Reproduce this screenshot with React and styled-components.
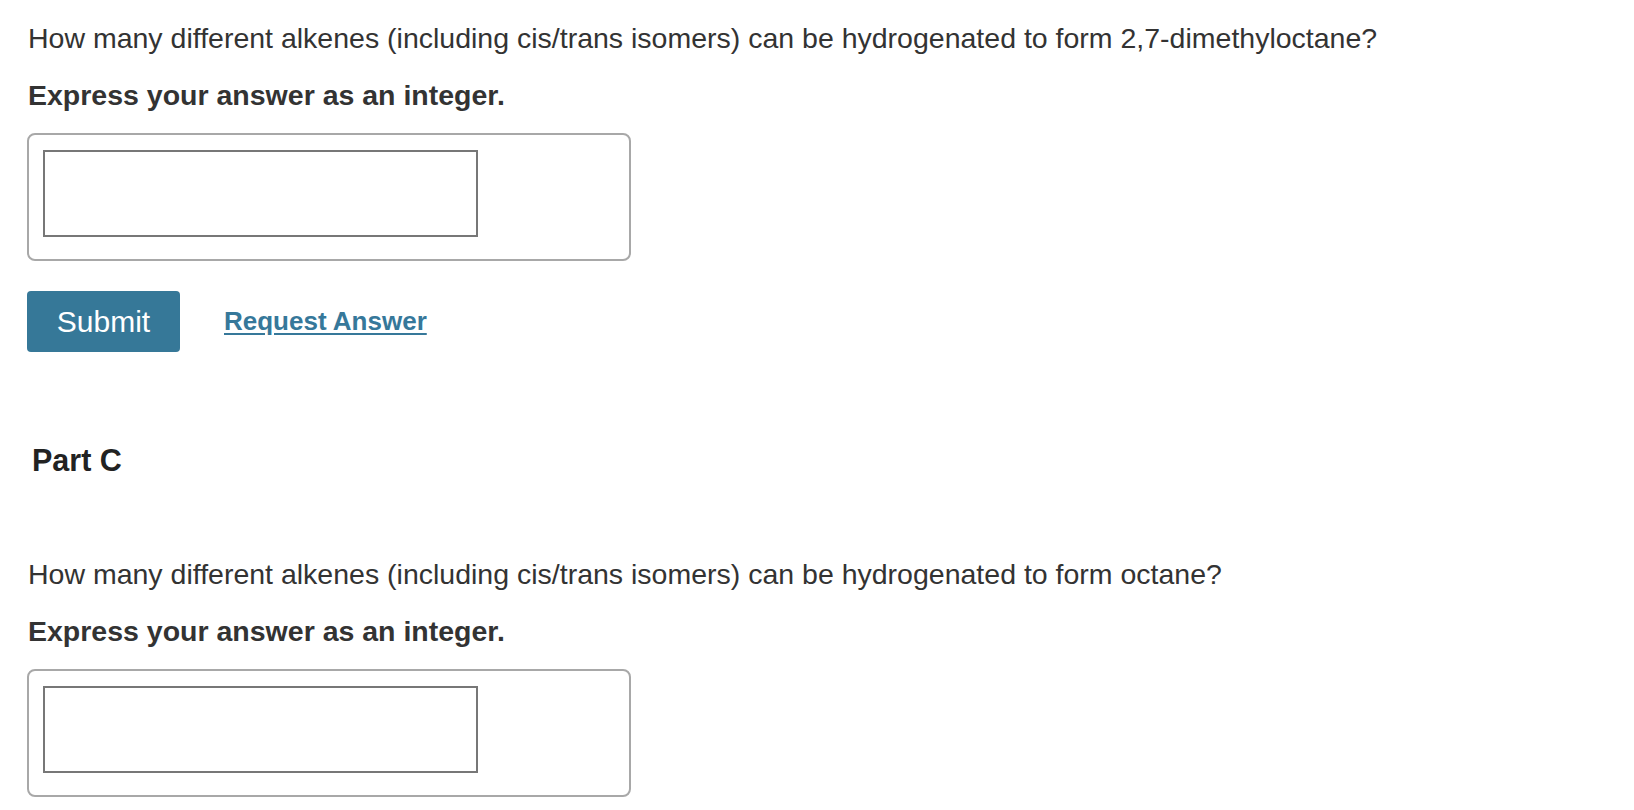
import React from "react";
import styled, { createGlobalStyle } from "styled-components";

const Global = createGlobalStyle`
  html, body { margin: 0; padding: 0; background: #fff; }
  body { font-family: "Liberation Sans", Arial, Helvetica, sans-serif; color: #333; }
`;

const Page = styled.div`
  display: flex;
  flex-direction: column;
  padding: 20px 0 0 28px;
`;

const Section = styled.section`
  display: flex;
  flex-direction: column;
  align-items: flex-start;
`;

const Prompt = styled.p`
  margin: 0;
  font-size: 28.5px;
  line-height: 36px;
  color: #333;
`;

const Instruction = styled.p`
  margin: 21px 0 0;
  font-size: 28.5px;
  line-height: 36px;
  font-weight: bold;
  color: #333;
`;

const AnswerBox = styled.div`
  margin: 20px 0 0 -1px;
  width: 604px;
  height: 128px;
  box-sizing: border-box;
  border: 2px solid #a8a8a8;
  border-radius: 8px;
  padding: 15px 0 0 14px;
`;

const AnswerInput = styled.input`
  display: block;
  width: 435px;
  height: 87px;
  box-sizing: border-box;
  border: 2px solid #777;
  border-radius: 0;
  margin: 0;
  padding: 0 8px;
  font-size: 26px;
  font-family: inherit;
  outline: none;
`;

const Actions = styled.div`
  display: flex;
  align-items: center;
  gap: 44px;
  margin: 30px 0 0 -1px;
`;

const SubmitButton = styled.button`
  width: 153px;
  height: 61px;
  border: none;
  border-radius: 4px;
  background: #367898;
  color: #fff;
  font-family: inherit;
  font-size: 30px;
  cursor: pointer;
  padding: 0;
`;

const RequestLink = styled.a`
  color: #36789a;
  font-weight: bold;
  font-size: 26px;
  text-decoration: underline;
  text-underline-offset: 3px;
  cursor: pointer;
`;

const PartTitle = styled.h2`
  margin: 90px 0 0 4px;
  font-size: 30.5px;
  line-height: 36px;
  font-weight: bold;
  color: #222;
`;

const PartBody = styled(Section)`
  margin-top: 78px;
`;

function Question({ text }) {
  return (
    <>
      <Prompt>{text}</Prompt>
      <Instruction>Express your answer as an integer.</Instruction>
      <AnswerBox>
        <AnswerInput type="text" aria-label="answer" />
      </AnswerBox>
    </>
  );
}

export default function App() {
  return (
    <>
      <Global />
      <Page>
        <Section>
          <Question text="How many different alkenes (including cis/trans isomers) can be hydrogenated to form 2,7-dimethyloctane?" />
          <Actions>
            <SubmitButton>Submit</SubmitButton>
            <RequestLink>Request Answer</RequestLink>
          </Actions>
        </Section>
        <PartTitle>Part C</PartTitle>
        <PartBody>
          <Question text="How many different alkenes (including cis/trans isomers) can be hydrogenated to form octane?" />
        </PartBody>
      </Page>
    </>
  );
}
